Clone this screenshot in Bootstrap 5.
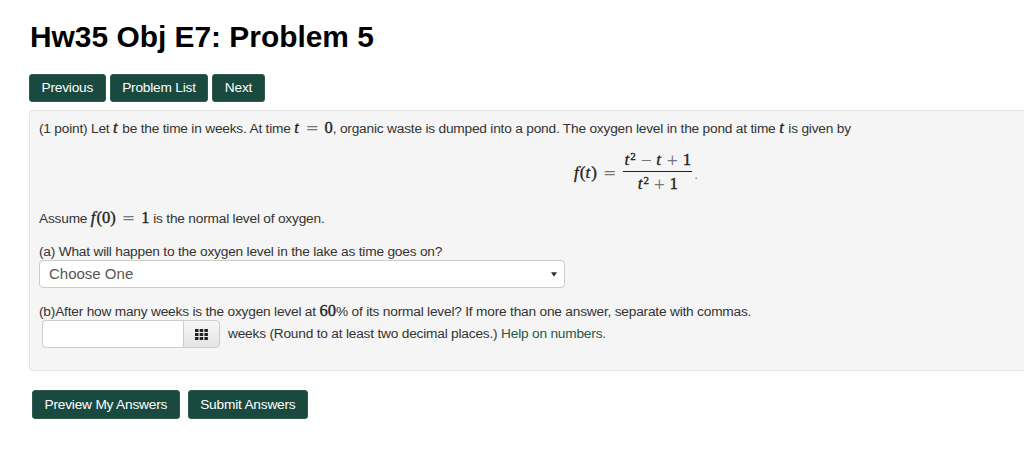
<!DOCTYPE html>
<html lang="en">
<head>
<meta charset="utf-8">
<title>Hw35 Obj E7: Problem 5</title>
<link href="https://cdn.jsdelivr.net/npm/bootstrap@5.3.0/dist/css/bootstrap.min.css" rel="stylesheet">
<style>
html,body{overflow:hidden;height:453px;background:#fff}
body{font-family:"Liberation Sans",Arial,sans-serif;font-size:13.7px;letter-spacing:-.2px;color:#333;line-height:20px;width:1024px}
.page-wrap{padding:18px 0 0 29px;width:1024px}
.hw-title{font-family:"Liberation Sans",Arial,sans-serif;font-weight:700;font-size:29.9px;letter-spacing:0;line-height:38px;color:#000;margin:0 0 18px 1px}
.hw-btn{background:#1a4a3f;border:1px solid #2f5a50;color:#fff;font-size:13.7px;letter-spacing:-.2px;line-height:20px;padding:3px 11.5px;border-radius:3px}
.hw-btn:hover{background:#1a4a3f;color:#fff}
.nav-btns{gap:4px;margin-bottom:8px}
.prob-panel{background:#f5f5f5;border:1px solid #e3e3e3;border-right:0;border-radius:4px 0 0 4px;height:261px;padding:8px 0 8px 9px}
.m{font-family:"Liberation Serif","DejaVu Serif",serif;font-size:16.5px;line-height:1;letter-spacing:0;-webkit-text-stroke:.35px currentColor;color:#222}
.mi{font-style:italic;padding-right:1px}
.mo{font-family:"DejaVu Serif",serif;font-weight:300;color:#777;-webkit-text-stroke:0;margin:0 2px;font-size:16px}
.disp{height:60px;margin-top:3px;padding-left:535px;line-height:20px}
.disp .m-in{font-size:17px}
.disp .frac .mo{margin:0;font-size:14.5px}
.frac{display:inline-flex;flex-direction:column;align-items:center;vertical-align:middle;margin-left:5px}
.frac-top{border-bottom:1px solid #222;padding:0 1px 1px;line-height:19px}
.frac-bot{padding-top:2px;line-height:19px}
sup{font-size:11px;top:-.45em}
.l-assume{margin-top:7px}
.l-a{margin-top:13px;line-height:20px;height:18px}
.hw-select{width:526px;height:28px;font-size:15px;letter-spacing:0;color:#555;padding:0 9px;border:1px solid #ccc;border-radius:4px;background-color:#fff;font-family:inherit;line-height:26px;background-image:url("data:image/svg+xml,%3Csvg xmlns='http://www.w3.org/2000/svg' viewBox='0 0 7 5'%3E%3Cpath fill='%23333' d='M0 0h7L3.500 5z'/%3E%3C/svg%3E");background-size:6px 5px;background-position:right 7px center}
.l-b{margin-top:14px;line-height:20px;height:18px}
.ans-row{gap:8px;margin-left:3px}
.ans-input{width:141px;height:28px;border:1px solid #ccc;border-right:0;border-radius:4px 0 0 4px;background:#fff;padding:0}
.ans-tool{width:37px;height:28px;padding:0;border:1px solid #ccc;border-radius:0 4px 4px 0;background:linear-gradient(#f7f7f7,#e4e4e4);color:#222;line-height:0}
.help-link{color:#1a5a4c;text-decoration:none}
.sub-btns{gap:8px;margin:19px 0 0 3px}
.sub-btns .hw-btn{padding:3.5px 11.5px}
.dot-mark{align-self:center;margin:5px 0 0 2px;color:#777}
</style>
</head>
<body>
<div class="page-wrap">
  <h1 class="hw-title">Hw35 Obj E7: Problem 5</h1>
  <div class="d-flex nav-btns">
    <a class="btn hw-btn" href="#">Previous</a>
    <a class="btn hw-btn" href="#">Problem List</a>
    <a class="btn hw-btn" href="#">Next</a>
  </div>
  <div class="prob-panel">
    <div>(1 point) Let <span class="m mi">t</span> be the time in weeks. At time <span class="m mi">t</span> <span class="m mo">=</span> <span class="m">0</span>, organic waste is dumped into a pond. The oxygen level in the pond at time <span class="m mi">t</span> is given by</div>
    <div class="disp d-flex align-items-center">
      <span class="m m-in"><span class="mi">f</span>(<span class="mi">t</span>) <span class="mo">=</span></span>
      <span class="frac m m-in">
        <span class="frac-top"><span class="mi">t</span><sup>2</sup> <span class="mo">−</span> <span class="mi">t</span> <span class="mo">+</span> 1</span>
        <span class="frac-bot"><span class="mi">t</span><sup>2</sup> <span class="mo">+</span> 1</span>
      </span>
      <span class="dot-mark">.</span>
    </div>
    <div class="l-assume">Assume <span class="m"><span class="mi">f</span>(0) <span class="mo">=</span> 1</span> is the normal level of oxygen.</div>
    <div class="l-a">(a) What will happen to the oxygen level in the lake as time goes on?</div>
    <select class="form-select hw-select" aria-label="Choose One"><option>Choose One</option></select>
    <div class="l-b">(b)After how many weeks is the oxygen level at <span class="m">60</span>% of its normal level? If more than one answer, separate with commas.</div>
    <div class="d-flex align-items-center ans-row">
      <div class="d-flex">
        <input class="ans-input" type="text" aria-label="answer">
        <button class="ans-tool" type="button" aria-label="Equation editor">
          <svg width="13" height="11" viewBox="0 0 13 11"><path fill="#222" d="M0 0h3.500v3H0zM4.700 0h3.500v3H4.700zM9.400 0h3.500v3H9.400zM0 4h3.500v3H0zM4.700 4h3.500v3H4.700zM9.400 4h3.500v3H9.400zM0 8h3.500v3H0zM4.700 8h3.500v3H4.700zM9.400 8h3.500v3H9.400z"/></svg>
        </button>
      </div>
      <span>weeks (Round to at least two decimal places.) <a class="help-link" href="#">Help on numbers.</a></span>
    </div>
  </div>
  <div class="d-flex sub-btns">
    <button class="btn hw-btn" type="button">Preview My Answers</button>
    <button class="btn hw-btn" type="button">Submit Answers</button>
  </div>
</div>
<script src="https://cdn.jsdelivr.net/npm/bootstrap@5.3.0/dist/js/bootstrap.bundle.min.js"></script>
</body>
</html>
